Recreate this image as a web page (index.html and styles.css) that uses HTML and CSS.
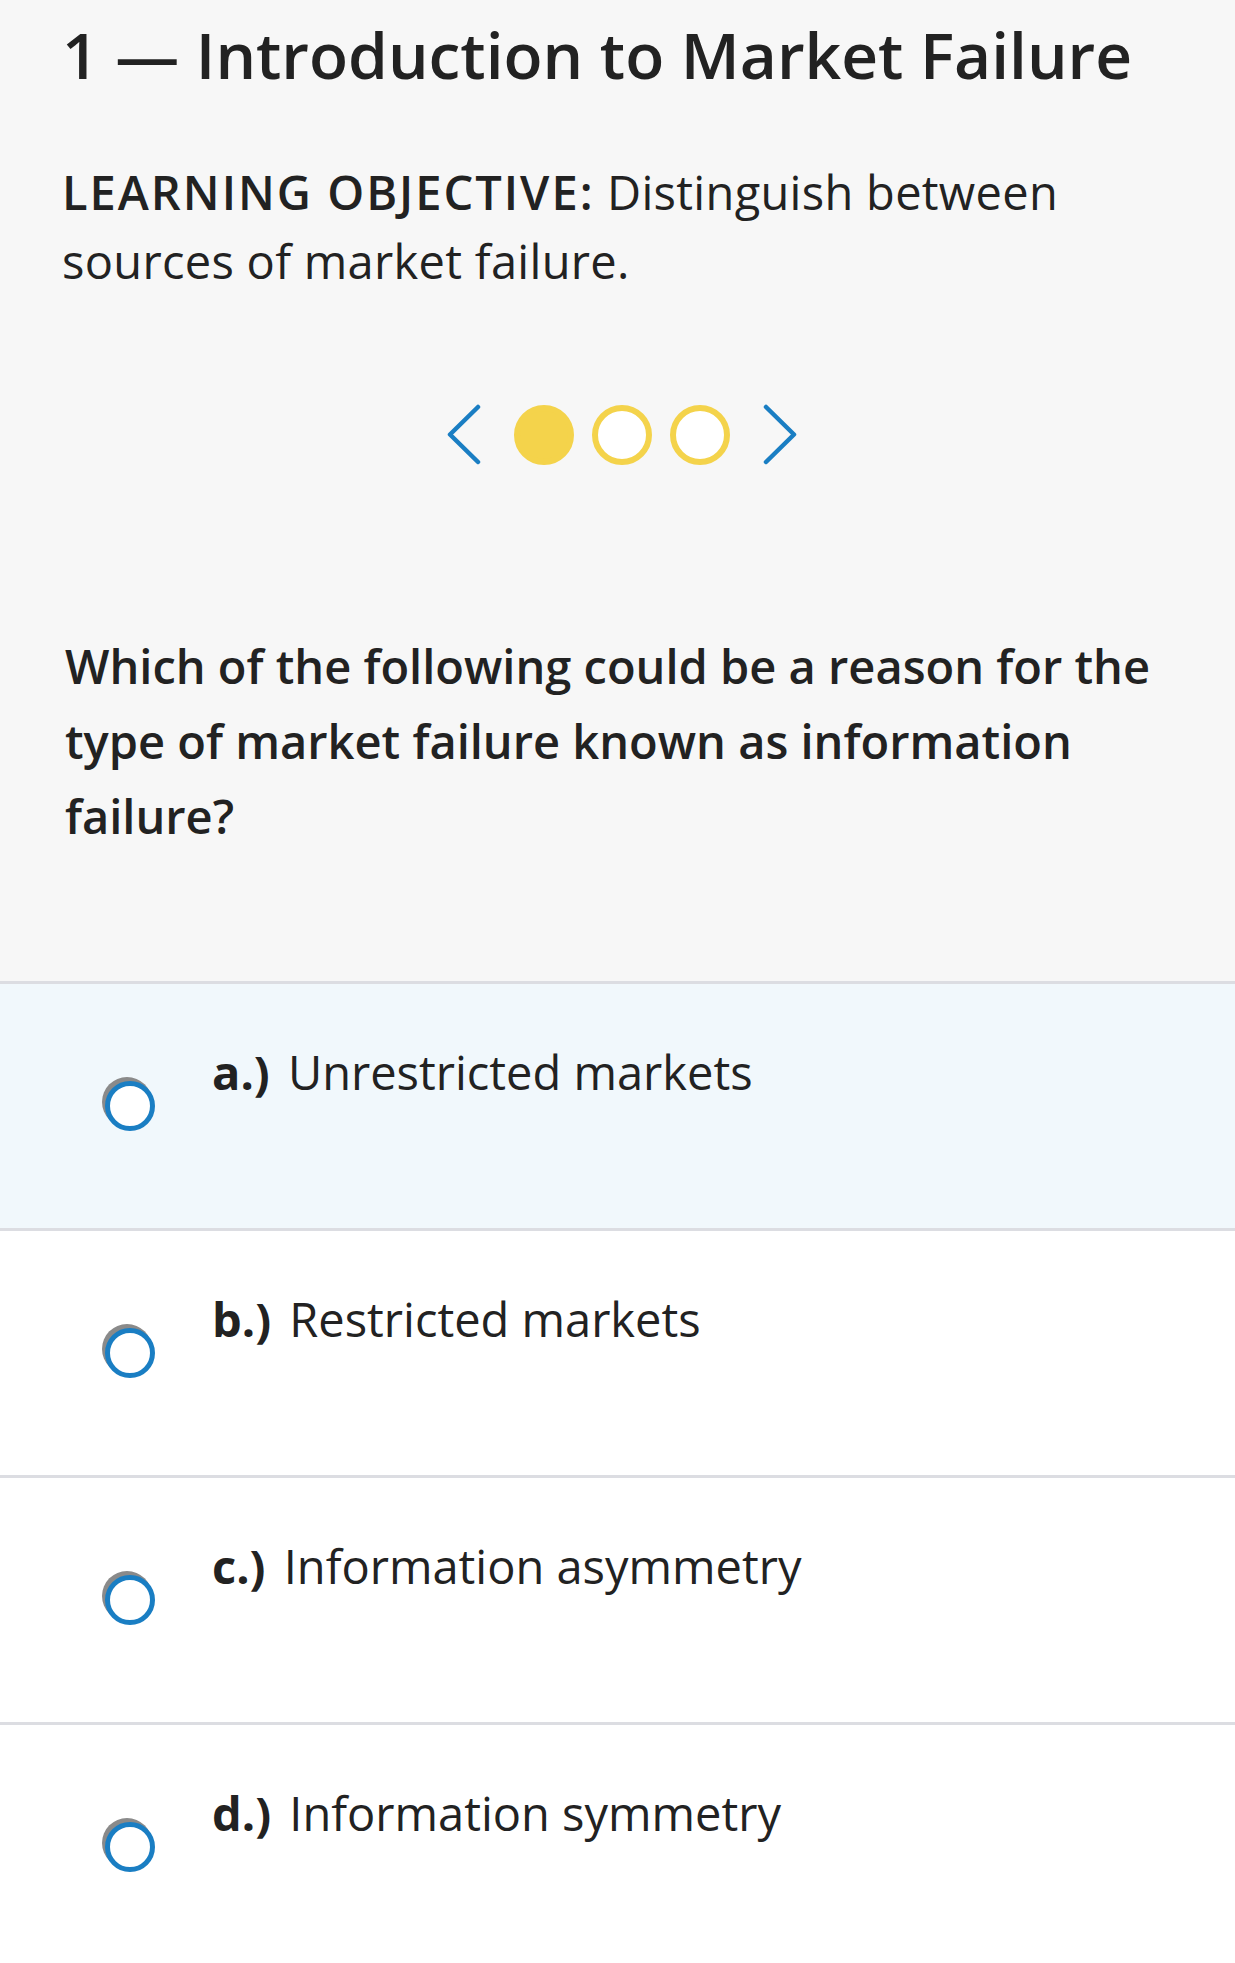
FILE: index.html
```html
<!DOCTYPE html>
<html lang="en">
<head>
<meta charset="utf-8">
<title>1 — Introduction to Market Failure</title>
<link rel="stylesheet" href="styles.css">
</head>
<body>
<main class="quiz">
  <section class="intro">
    <h1 class="title">1 — Introduction to Market Failure</h1>
    <p class="objective"><strong>LEARNING OBJECTIVE:</strong> Distinguish between sources of market failure.</p>
    <nav class="pager">
      <svg class="chev" viewBox="0 0 34 61" width="34" height="61"><polyline points="31,3 3,30.5 31,58" fill="none" stroke="#1a7ec3" stroke-width="4.5" stroke-linecap="round" stroke-linejoin="round"/></svg>
      <span class="dot dot-on"></span>
      <span class="dot"></span>
      <span class="dot"></span>
      <svg class="chev" viewBox="0 0 34 61" width="34" height="61"><polyline points="3,3 31,30.5 3,58" fill="none" stroke="#1a7ec3" stroke-width="4.5" stroke-linecap="round" stroke-linejoin="round"/></svg>
    </nav>
    <p class="question">Which of the following could be a reason for the type of market failure known as information failure?</p>
  </section>
  <ul class="options">
    <li class="option option-active"><span class="radio"></span><span class="label"><b>a.)</b> Unrestricted markets</span></li>
    <li class="option"><span class="radio"></span><span class="label"><b>b.)</b> Restricted markets</span></li>
    <li class="option"><span class="radio"></span><span class="label"><b>c.)</b> Information asymmetry</span></li>
    <li class="option"><span class="radio"></span><span class="label"><b>d.)</b> Information symmetry</span></li>
  </ul>
</main>
</body>
</html>
```

FILE: styles.css
```css
html, body {
  margin: 0;
  padding: 0;
  background: #ffffff;
}
body {
  font-family: "Open Sans", "Lato", sans-serif;
  color: #222222;
}
.quiz {
  width: 1235px;
}
.intro {
  background: #f7f7f7;
  padding: 12px 75px 127px 62px;
}
.title {
  margin: 0;
  font-size: 64px;
  font-weight: 600;
  line-height: 86px;
  white-space: nowrap;
}
.objective {
  margin: 60px 0 0;
  font-size: 47px;
  line-height: 69px;
  font-weight: 400;
  letter-spacing: 0.3px;
}
.objective strong {
  font-weight: 600;
  letter-spacing: 2px;
}
.pager {
  margin-top: 108px;
  display: flex;
  justify-content: center;
  align-items: center;
  gap: 18px;
  padding-left: 21px;
}
.chev {
  display: block;
  margin: 0 15px;
}
.dot {
  width: 60px;
  height: 60px;
  border-radius: 50%;
  box-sizing: border-box;
  border: 6px solid #f4d34b;
  background: #ffffff;
}
.dot-on {
  background: #f4d34b;
}
.question {
  margin: 164px 0 0 3px;
  font-size: 47px;
  font-weight: 600;
  line-height: 75px;
}
.options {
  list-style: none;
  margin: 0;
  padding: 0;
}
.option {
  position: relative;
  height: 244px;
  border-top: 3px solid #dcdde2;
  background: #ffffff;
  display: flex;
  align-items: center;
  padding-left: 105px;
}
.option-active {
  background: #f1f8fc;
}
.radio {
  position: relative;
  width: 50px;
  height: 50px;
  flex: none;
}
.radio::before {
  content: "";
  position: absolute;
  left: -3px;
  top: -4px;
  width: 50px;
  height: 50px;
  border-radius: 50%;
  background: #8a8a8a;
}
.radio::after {
  content: "";
  position: absolute;
  left: 0;
  top: 0;
  width: 50px;
  height: 50px;
  box-sizing: border-box;
  border-radius: 50%;
  border: 5px solid #1a7ec3;
  background: #ffffff;
}
.label {
  align-self: flex-start;
  margin-top: 53px;
  margin-left: 57px;
  font-size: 47px;
  line-height: 70px;
  font-weight: 400;
}
.label b {
  font-weight: 700;
  margin-right: 6px;
}
```
